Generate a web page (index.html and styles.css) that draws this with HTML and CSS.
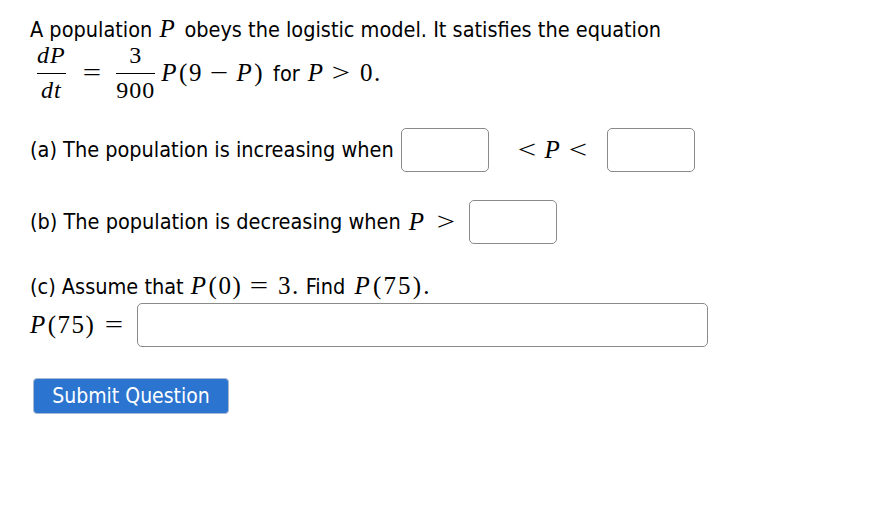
FILE: index.html
```html
<!DOCTYPE html>
<html lang="en">
<head>
<meta charset="utf-8">
<title>Logistic model</title>
<link rel="stylesheet" href="styles.css">
</head>
<body>
<div class="page">
  <p class="line">A population <span class="m v">P</span> obeys the logistic model. It satisfies the equation</p>

  <div class="eq">
    <span class="frac f1"><span class="num"><i>dP</i></span><span class="den"><i>dt</i></span></span>
    <span class="m eq-sign"><span class="rel">=</span></span>
    <span class="frac f2"><span class="num">3</span><span class="den">900</span></span>
    <span class="m expr"><i>P</i>(9<span class="bin">−</span><i>P</i>)</span>
    <span class="txt">for</span>
    <span class="m expr2"><i>P</i><span class="rel">&gt;</span>0.</span>
  </div>

  <div class="row row-a">
    <span class="txt">(a) The population is increasing when</span>
    <span class="box box-a1"></span>
    <span class="m between"><span class="rel">&lt;</span><i>P</i><span class="rel">&lt;</span></span>
    <span class="box box-a2"></span>
  </div>

  <div class="row row-b">
    <span class="txt">(b) The population is decreasing when</span>
    <span class="m gt"><i>P</i><span class="rel">&gt;</span></span>
    <span class="box box-b"></span>
  </div>

  <p class="line row-c">(c) Assume that <span class="m p0"><i>P</i>(0)<span class="rel">=</span>3.</span> Find <span class="m p75"><i>P</i>(75).</span></p>

  <div class="row row-d">
    <span class="m lhs"><i>P</i>(75)<span class="rel">=</span></span>
    <span class="box box-d"></span>
  </div>

  <button class="submit" type="button">Submit Question</button>
</div>
</body>
</html>
```
FILE: styles.css
```css
html, body {
  margin: 0;
  background: #ffffff;
}

.page {
  padding: 18px 0 0 30px;
  color: #000;
  font-family: "DejaVu Sans", "Liberation Sans", sans-serif;
  font-stretch: condensed;
  font-size: 21.5px;
}

.line {
  margin: 0;
  line-height: 24px;
  white-space: nowrap;
}

/* math */
.m {
  font-family: "Liberation Serif", "Times New Roman", serif;
  font-stretch: normal;
  font-size: 25px;
  line-height: 24px;
  letter-spacing: 1.5px;
  font-style: normal;
}
.line .m {
  line-height: 1px;
}
.m i, .v {
  font-style: italic;
}
.v { margin: 0 2px 0 1px; }
.m i { margin-right: 1px; }

.rel, .bin {
  display: inline-block;
  font-style: normal;
  transform: scaleX(1.3);
}
.rel { margin: 0 8px; }
.bin { margin: 0 9px; }

/* equation row */
.eq {
  display: flex;
  align-items: center;
  height: 60px;
  padding-left: 2px;
}
.frac {
  display: inline-flex;
  flex-direction: column;
  align-items: stretch;
  text-align: center;
  font-family: "Liberation Serif", "Times New Roman", serif;
  font-stretch: normal;
  font-size: 24px;
  letter-spacing: 1px;
}
.frac .num {
  line-height: 24px;
  padding-bottom: 6px;
  border-bottom: 1.3px solid #000;
}
.frac .den {
  line-height: 24px;
  padding-top: 4px;
}
.f1 { padding: 0 4px 0 5px; }
.f2 { padding: 0 2px; }
.eq-sign {
  padding-top: 2px;
}
.eq-sign .rel { margin: 0 14px 0 15px; }
.expr {
  margin-left: 4px;
  padding-top: 2px;
}
.eq .txt {
  margin: 0 8px 0 9px;
  padding-top: 2px;
}
.expr2 {
  padding-top: 2px;
}
.expr2 .rel { margin: 0 10px 0 9px; }

/* answer rows */
.row {
  display: flex;
  align-items: center;
  line-height: 24px;
  white-space: nowrap;
}
.row-a { margin-top: 26px; }
.row-b { margin-top: 28px; }
.row-c { margin-top: 31px; }
.row-d { margin-top: 4px; }

.box {
  display: block;
  box-sizing: border-box;
  height: 44px;
  width: 88px;
  border: 1px solid #8a8a8a;
  border-radius: 5px;
  background: #fff;
}
.box-a1 { margin-left: 7px; }
.between {
  margin: 0 11px 0 22px;
}
.between .rel { margin: 0 9px; }
.gt { margin-left: 8px; }
.gt .rel { margin: 0 0 0 12px; }
.box-b { margin-left: 15px; }

.p0 { margin-left: 1px; }
.p0 .rel { margin: 0 10px; }
.p75 { margin-left: 3px; letter-spacing: 2.2px; }

.lhs { margin-left: 0; }
.lhs .rel { margin: 0 13px 0 12px; }
.box-d {
  width: 571px;
  margin-left: 1px;
}

.submit {
  display: block;
  margin: 31px 0 0 3px;
  height: 36px;
  width: 196px;
  padding: 0;
  border: 1px solid #a9b9d2;
  border-radius: 4px;
  background: #2b74cf;
  color: #fff;
  font-family: "DejaVu Sans", "Liberation Sans", sans-serif;
  font-stretch: condensed;
  font-size: 21px;
  line-height: 34px;
  cursor: pointer;
}
```
